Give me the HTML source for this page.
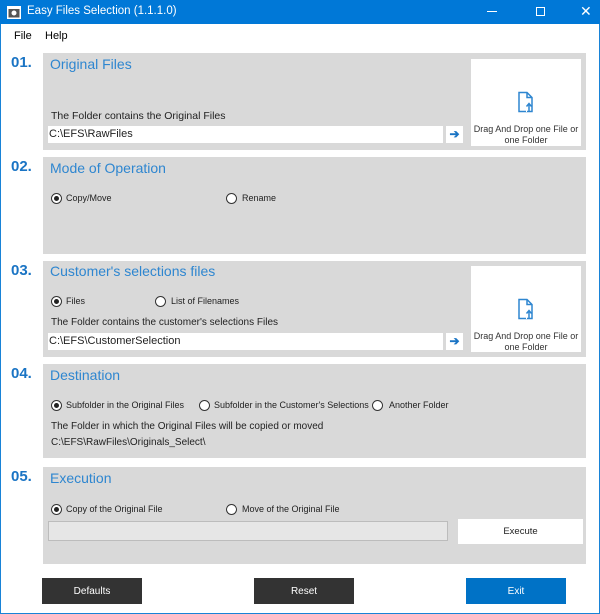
<!DOCTYPE html>
<html><head><meta charset="utf-8"><style>
*{margin:0;padding:0;box-sizing:border-box}
body{width:600px;height:614px;overflow:hidden;background:#fff;font-family:"Liberation Sans",sans-serif;position:relative;font-size:9px;color:#222}
.a{position:absolute}
.tb{left:0;top:0;width:600px;height:24px;background:#0078d7;color:#fff}
.frame{left:0;top:24px;width:600px;height:590px;border:1px solid #1883d7;border-top:none}
.panel{background:#d9d9d9;left:43px;width:543px}
.num{left:11px;color:#1a74c4;font-weight:bold;font-size:15px}
.title{color:#2e86d0;font-size:14px}
.lbl{font-size:9px;color:#222;white-space:nowrap}
.pl{font-size:10px;color:#222}
.tx{background:#fff;height:17px;font-size:11px;padding:2px 0 0 1px;color:#222}
.arr{background:#fff;width:17px;height:17px;color:#1a74c4;font-size:12px;text-align:center;line-height:16px;font-weight:bold}
.drop{background:#fff;width:110px;text-align:center;font-size:9px;line-height:11px;color:#333}
.rb{width:11px;height:11px;border:1px solid #333;border-radius:50%;background:#fff}
.rb.on::after{content:"";position:absolute;left:2px;top:2px;width:5px;height:5px;border-radius:50%;background:#222}
.btn{top:578px;width:100px;height:26px;background:#333;color:#fff;font-size:10px;text-align:center;line-height:27px}
</style></head><body>
<div class="a tb">
 <svg class="a" style="left:7px;top:5px" width="14" height="14"><rect x="0.5" y="1.5" width="13" height="12" fill="#fff" stroke="#fff"/><rect x="1.5" y="4" width="11" height="8.5" fill="#555"/><circle cx="7" cy="8" r="2.5" fill="#fff"/></svg>
 <div class="a" style="left:27px;top:5px;font-size:11.5px">Easy Files Selection (1.1.1.0)</div>
 <div class="a" style="left:487px;top:11px;width:10px;height:1px;background:#fff"></div>
 <div class="a" style="left:536px;top:7px;width:9px;height:9px;border:1px solid #fff"></div>
 <div class="a" style="left:580px;top:3px;font-size:14px">✕</div>
</div>
<div class="a frame"></div>
<div class="a" style="left:14px;top:30px;font-size:11px;color:#000">File</div>
<div class="a" style="left:45px;top:30px;font-size:11px;color:#000">Help</div>

<div class="a num" style="top:54px">01.</div>
<div class="a panel" style="top:53px;height:97px"></div>
<div class="a title" style="left:50px;top:56px">Original Files</div>
<div class="a pl" style="left:51px;top:110px;font-size:10.5px">The Folder contains the Original Files</div>
<div class="a tx" style="left:48px;top:126px;width:395px">C:\EFS\RawFiles</div>
<div class="a arr" style="left:446px;top:126px">➔</div>
<div class="a drop" style="left:471px;top:59px;height:87px">
<svg class="a" style="left:45px;top:32px" width="20" height="22" viewBox="0 0 20 22"><path d="M3 1.5H11L16 6.5V20.5H3Z M11 1.5V6.5H16" fill="none" stroke="#2e86d0" stroke-width="1.5"/><path d="M13 20V13M10.5 15.5L13 12.5L15.5 15.5" fill="none" stroke="#2e86d0" stroke-width="1.5"/><rect x="10" y="17" width="1" height="4" fill="#fff"/></svg>
<div class="a" style="left:0;top:65px;width:110px">Drag And Drop one File or one Folder</div></div>

<div class="a num" style="top:158px">02.</div>
<div class="a panel" style="top:157px;height:97px"></div>
<div class="a title" style="left:50px;top:160px">Mode of Operation</div>
<div class="a rb on" style="left:51px;top:193px"></div><div class="a lbl" style="left:66px;top:193px">Copy/Move</div>
<div class="a rb" style="left:226px;top:193px"></div><div class="a lbl" style="left:242px;top:193px">Rename</div>

<div class="a num" style="top:262px">03.</div>
<div class="a panel" style="top:261px;height:96px"></div>
<div class="a title" style="left:50px;top:263px">Customer's selections files</div>
<div class="a rb on" style="left:51px;top:296px"></div><div class="a lbl" style="left:66px;top:296px">Files</div>
<div class="a rb" style="left:155px;top:296px"></div><div class="a lbl" style="left:171px;top:296px">List of Filenames</div>
<div class="a pl" style="left:51px;top:317px">The Folder contains the customer's selections Files</div>
<div class="a tx" style="left:48px;top:333px;width:395px">C:\EFS\CustomerSelection</div>
<div class="a arr" style="left:446px;top:333px">➔</div>
<div class="a drop" style="left:471px;top:266px;height:86px">
<svg class="a" style="left:45px;top:32px" width="20" height="22" viewBox="0 0 20 22"><path d="M3 1.5H11L16 6.5V20.5H3Z M11 1.5V6.5H16" fill="none" stroke="#2e86d0" stroke-width="1.5"/><path d="M13 20V13M10.5 15.5L13 12.5L15.5 15.5" fill="none" stroke="#2e86d0" stroke-width="1.5"/><rect x="10" y="17" width="1" height="4" fill="#fff"/></svg>
<div class="a" style="left:0;top:65px;width:110px">Drag And Drop one File or one Folder</div></div>

<div class="a num" style="top:365px">04.</div>
<div class="a panel" style="top:364px;height:94px"></div>
<div class="a title" style="left:50px;top:367px">Destination</div>
<div class="a rb on" style="left:51px;top:400px"></div><div class="a lbl" style="left:66px;top:400px">Subfolder in the Original Files</div>
<div class="a rb" style="left:199px;top:400px"></div><div class="a lbl" style="left:214px;top:400px">Subfolder in the Customer's Selections</div>
<div class="a rb" style="left:372px;top:400px"></div><div class="a lbl" style="left:389px;top:400px">Another Folder</div>
<div class="a pl" style="left:51px;top:421px">The Folder in which the Original Files will be copied or moved</div>
<div class="a pl" style="left:51px;top:437px">C:\EFS\RawFiles\Originals_Select\</div>

<div class="a num" style="top:468px">05.</div>
<div class="a panel" style="top:467px;height:97px"></div>
<div class="a title" style="left:50px;top:470px">Execution</div>
<div class="a rb on" style="left:51px;top:504px"></div><div class="a lbl" style="left:66px;top:504px">Copy of the Original File</div>
<div class="a rb" style="left:226px;top:504px"></div><div class="a lbl" style="left:242px;top:504px">Move of the Original File</div>
<div class="a" style="left:48px;top:521px;width:400px;height:20px;background:#e6e6e6;border:1px solid #bcbcbc"></div>
<div class="a" style="left:458px;top:519px;width:125px;height:25px;background:#fff;text-align:center;line-height:25px;font-size:9.5px;color:#222">Execute</div>

<div class="a btn" style="left:42px">Defaults</div>
<div class="a btn" style="left:254px">Reset</div>
<div class="a btn" style="left:466px;background:#0072c6">Exit</div>
</body></html>
